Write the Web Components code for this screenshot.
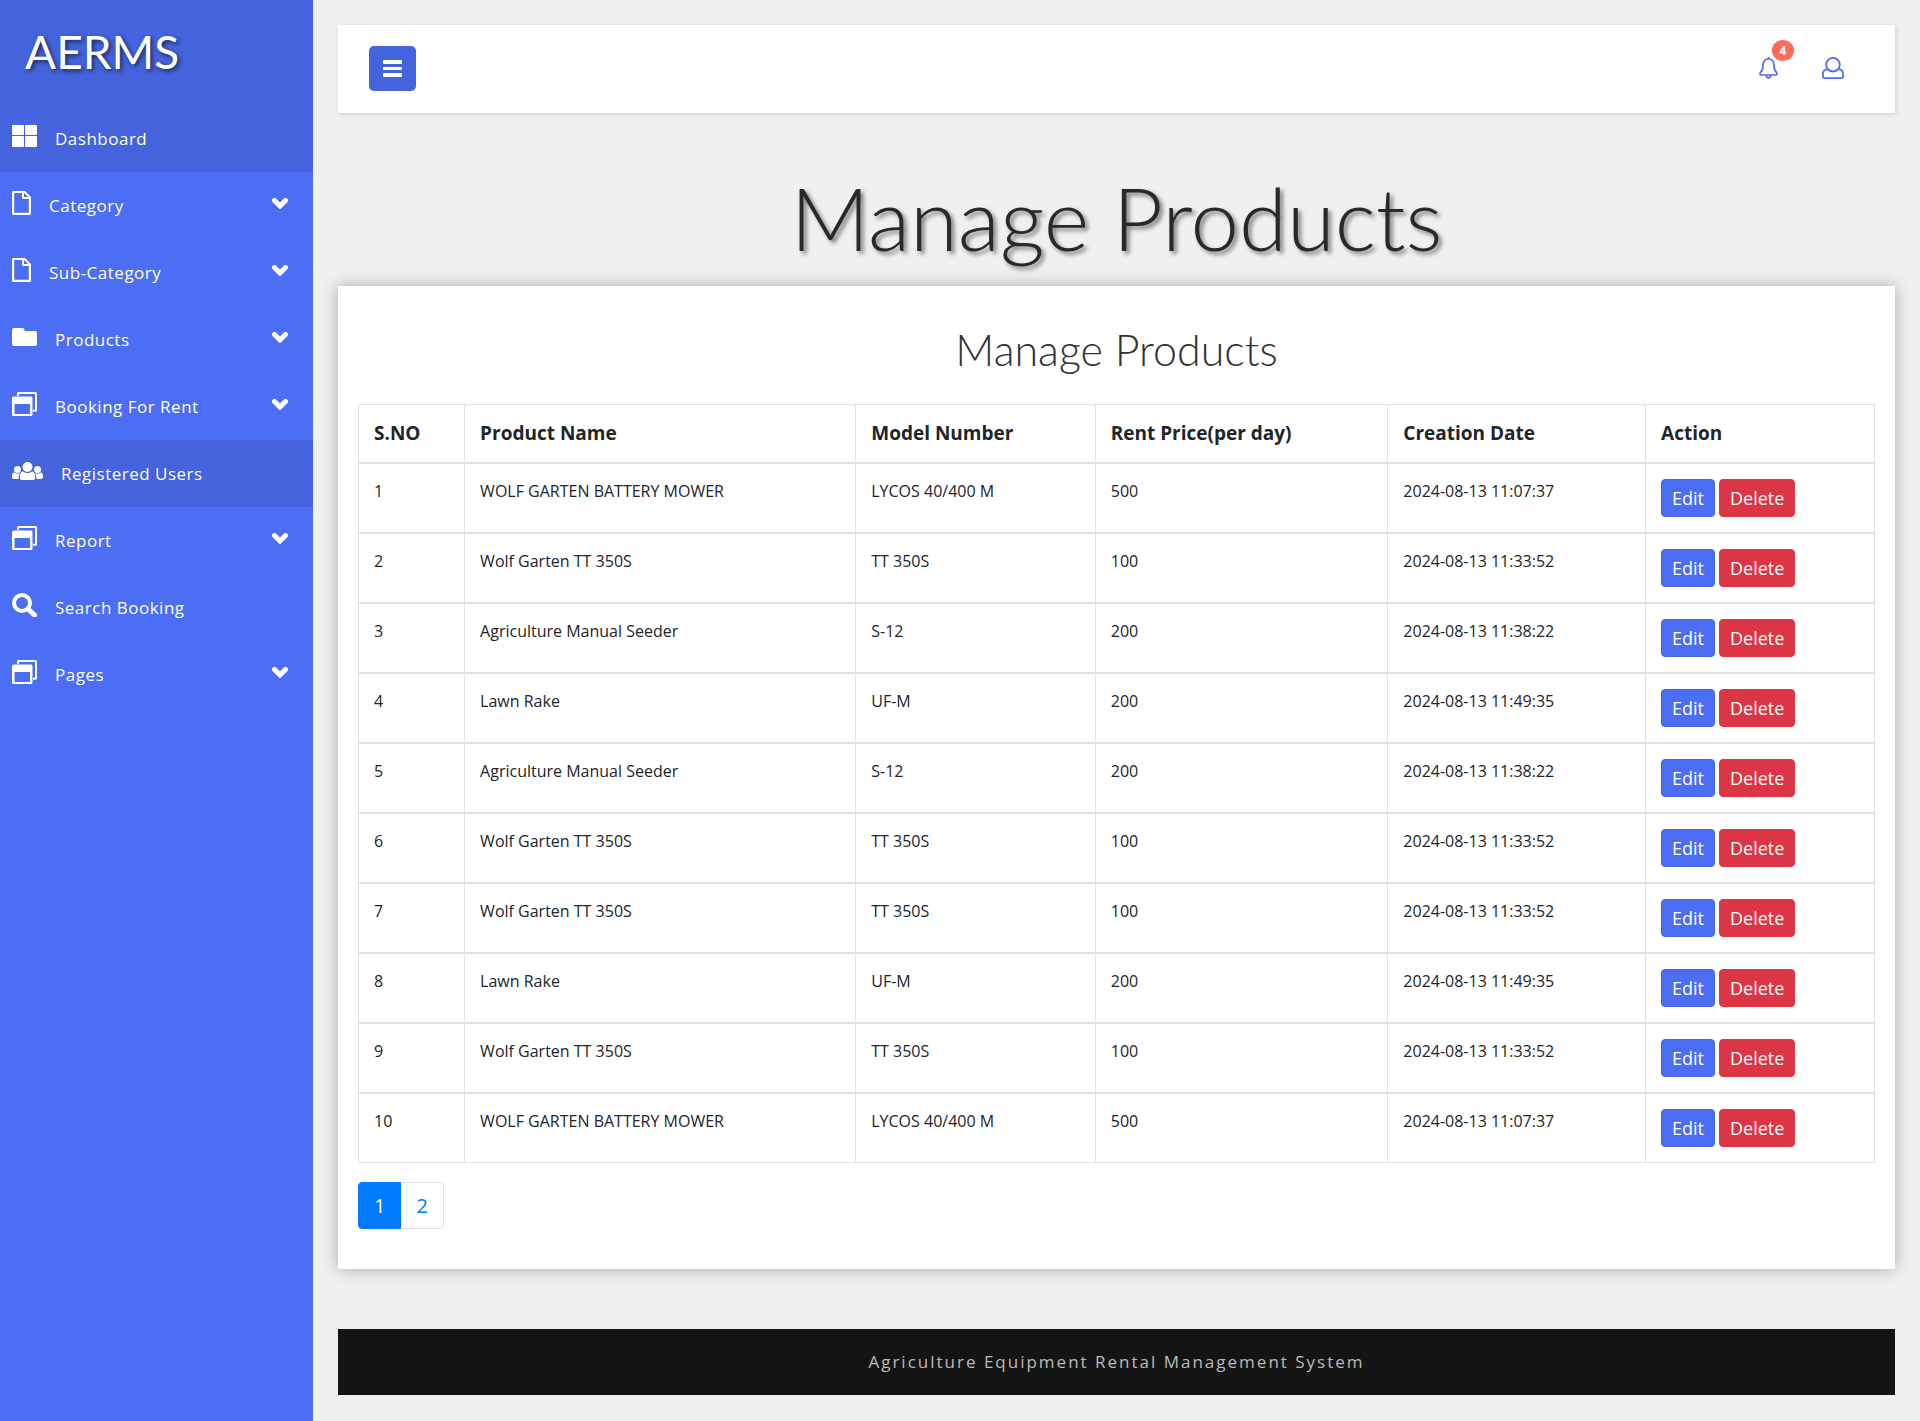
<!DOCTYPE html>
<html lang="en">
<head>
<meta charset="utf-8">
<meta name="viewport" content="width=device-width, initial-scale=1">
<title>AERMS - Manage Products</title>
<style>
  body {
    margin: 0;
    background: #f0f0f0;
    color: #212529;
    font-family: "Open Sans", "Noto Sans", sans-serif;
    font-size: 17px;
    line-height: 24px;
  }
</style>
</head>
<body>
<app-shell>
  <app-sidebar slot="sidebar" brand="AERMS">
    <nav-item icon="dashboard" active>Dashboard</nav-item>
    <nav-item icon="file" expandable>Category</nav-item>
    <nav-item icon="file" expandable>Sub-Category</nav-item>
    <nav-item icon="folder" expandable>Products</nav-item>
    <nav-item icon="windows" expandable>Booking For Rent</nav-item>
    <nav-item icon="users" active>Registered Users</nav-item>
    <nav-item icon="windows" expandable>Report</nav-item>
    <nav-item icon="search">Search Booking</nav-item>
    <nav-item icon="windows" expandable>Pages</nav-item>
  </app-sidebar>
  <top-bar count="4"></top-bar>
  <page-title>Manage Products</page-title>
  <content-card heading="Manage Products">
    <product-table></product-table>
    <page-links pages="2" current="1"></page-links>
  </content-card>
  <page-footer>Agriculture Equipment Rental Management System</page-footer>
</app-shell>

<script>
const ICONS = {
  dashboard: [25, 22, '<rect width="12" height="10" rx="1"/><rect x="13" width="12" height="10" rx="1"/><rect y="11" width="12" height="11" rx="1"/><rect x="13" y="11" width="12" height="11" rx="1"/>'],
  file: [19, 24, '<path fill-rule="evenodd" d="M1.500 0H13l6 6v16.500a1.500 1.500 0 0 1-1.500 1.500h-16A1.500 1.500 0 0 1 0 22.500v-21A1.500 1.500 0 0 1 1.500 0zM2.200 2v19.800h14.600V8h-5.300A1.500 1.500 0 0 1 10 6.500V2zM12 2.200V6h4.300L12.600 2.400z"/>'],
  folder: [25, 18, '<path d="M2 0h8.500a2 2 0 0 1 2 2v1H23a2 2 0 0 1 2 2v11a2 2 0 0 1-2 2H2a2 2 0 0 1-2-2V2a2 2 0 0 1 2-2z"/>'],
  windows: [25, 24, '<path fill-rule="evenodd" d="M1.500 4.500h17.500a1.500 1.500 0 0 1 1.500 1.500v16.500a1.500 1.500 0 0 1-1.500 1.500H1.500A1.500 1.500 0 0 1 0 22.500V6a1.500 1.500 0 0 1 1.500-1.500zM2.500 12v10h15.500V12z"/><path d="M5 4V1.500A1.500 1.500 0 0 1 6.500 0h17A1.500 1.500 0 0 1 25 1.500v16.700a1.500 1.500 0 0 1-1.500 1.500H21v-2h2V2H7v2z"/>'],
  users: [31, 18, '<circle cx="15.500" cy="5" r="5"/><circle cx="5.500" cy="7.500" r="3.500"/><circle cx="25.500" cy="7.500" r="3.500"/><path d="M11 9.500q4.500 3 9 0c2 0 3.200 2.500 3.200 6 0 1.700-.800 2.500-2.300 2.500H10.100C8.600 18 7.800 17.200 7.800 15.500c0-3.500 1.200-6 3.200-6z"/><path d="M2 10.500q3 2 6 .500c-1 1.500-1.500 3.500-1.500 6H2c-1.300 0-2-.800-2-2 0-2.500.500-4.500 2-4.500zM29 10.500q-3 2-6 .500c1 1.500 1.500 3.500 1.500 6H29c1.300 0 2-.800 2-2 0-2.500-.500-4.500-2-4.500z"/>'],
  search: [25, 24, '<circle cx="10" cy="10" r="8" fill="none" stroke="currentColor" stroke-width="4"/><path d="M16 16l6.500 6" stroke="currentColor" stroke-width="5" stroke-linecap="round"/>'],
  chevron: [16, 11, '<path d="M2.500 2.500L8 8l5.500-5.500" fill="none" stroke="currentColor" stroke-width="5" stroke-linecap="round"/>'],
  bars: [19, 17, '<rect width="19" height="4" rx="1"/><rect y="7" width="19" height="3" rx="1"/><rect y="13" width="19" height="4" rx="1"/>'],
  bell: [19, 22, '<g fill="none" stroke="currentColor" stroke-width="1.700"><path d="M9.500 2C5.500 2 4 5 4 8.500c0 4-1 5.500-2.300 6.700C.5 16.500.8 18 2.300 18h14.400c1.500 0 1.800-1.500.600-2.800C16 14 15 12.500 15 8.500 15 5 13.500 2 9.500 2z"/><path d="M9.500 0v2M7.300 18c0 3.800 4.400 3.800 4.400 0"/></g>'],
  user: [22, 22, '<g fill="none" stroke="currentColor" stroke-width="1.800"><ellipse cx="11" cy="7.700" rx="6.800" ry="6.800"/><path d="M5.200 12.300C2.300 12.300.9 14.500.9 17v2c0 1.300.7 2.100 2 2.100h16.200c1.300 0 2-.8 2-2.100v-2c0-2.500-1.400-4.700-4.300-4.700"/></g>']
};

function icon(name) {
  const [w, h, shape] = ICONS[name];
  return `<svg width="${w}" height="${h}" viewBox="0 0 ${w} ${h}" fill="currentColor" aria-hidden="true">${shape}</svg>`;
}

/** Page frame: sidebar on the left, stacked content on the right */
class AppShell extends HTMLElement {
  constructor() {
    super();
    this.attachShadow({ mode: 'open' }).innerHTML = `
      <style>
        :host {
          display: grid;
          grid-template-columns: 313px minmax(0, 1fr);
          min-height: 100vh;
        }
        main { padding: 25px; }
      </style>
      <slot name="sidebar"></slot>
      <main><slot></slot></main>
    `;
  }
}

class AppSidebar extends HTMLElement {
  connectedCallback() {
    this.attachShadow({ mode: 'open' }).innerHTML = `
      <style>
        :host { display: block; background: #4b6ef5; color: #fff; }
        header { background: #4463dc; padding: 20px 25px; height: 65px; }
        a {
          color: inherit;
          text-decoration: none;
          font: 400 46px/64px Lato, sans-serif;
          text-shadow: 2px 2px 4px rgba(0, 0, 0, 0.6);
        }
        nav { display: flex; flex-direction: column; }
      </style>
      <header><a href="#">${this.getAttribute('brand')}</a></header>
      <nav><slot></slot></nav>
    `;
  }
}

class NavItem extends HTMLElement {
  connectedCallback() {
    const arrow = this.hasAttribute('expandable') ? icon('chevron') : '';
    this.attachShadow({ mode: 'open' }).innerHTML = `
      <style>
        :host { display: block; }
        :host([active]) { background: #4463dc; }
        a {
          display: flex;
          align-items: center;
          gap: 18px;
          height: 62px;
          padding: 0 25px 5px 12px;
          color: #fff;
          letter-spacing: 0.5px;
          text-decoration: none;
        }
        .label { flex: 1; padding-top: 5px; }
      </style>
      <a href="#">${icon(this.getAttribute('icon'))}<span class="label"><slot></slot></span>${arrow}</a>
    `;
  }
}

class TopBar extends HTMLElement {
  connectedCallback() {
    this.attachShadow({ mode: 'open' }).innerHTML = `
      <style>
        :host {
          display: flex;
          align-items: center;
          justify-content: space-between;
          height: 86px;
          padding: 0 51px 2px 31px;
          background: #fff;
          box-shadow: 1px 1px 4px rgba(0, 0, 0, 0.15);
        }
        button {
          display: grid;
          place-items: center;
          width: 47px;
          height: 45px;
          padding: 0;
          border: 0;
          border-radius: 5px;
          background: #4463dc;
          color: #fff;
        }
        .links { display: flex; align-items: center; gap: 44px; }
        .links a { display: block; position: relative; color: #4b6ef5; text-decoration: none; }
        .links svg { display: block; }
        .badge {
          position: absolute;
          left: 13px;
          bottom: 18px;
          width: 22px;
          border-radius: 50%;
          background: #ff695c;
          color: #fff;
          font-size: 12px;
          font-weight: 700;
          line-height: 21px;
          text-align: center;
        }
      </style>
      <button type="button" aria-label="Toggle menu">${icon('bars')}</button>
      <div class="links">
        <a href="#" aria-label="Notifications">${icon('bell')}<span class="badge">${this.getAttribute('count')}</span></a>
        <a href="#" aria-label="Profile">${icon('user')}</a>
      </div>
    `;
  }
}

class PageTitle extends HTMLElement {
  connectedCallback() {
    this.attachShadow({ mode: 'open' }).innerHTML = `
      <style>
        :host { display: block; padding: 50px 0 13px; }
        h1 {
          margin: 0;
          color: #292929;
          font: 300 87px/110px Lato, sans-serif;
          text-align: center;
          text-shadow: 3px 3px 4px rgba(0, 0, 0, 0.5);
        }
      </style>
      <h1><slot></slot></h1>
    `;
  }
}

class ContentCard extends HTMLElement {
  connectedCallback() {
    this.attachShadow({ mode: 'open' }).innerHTML = `
      <style>
        :host {
          display: block;
          margin-bottom: 60px;
          padding: 34px 20px 40px;
          background: #fff;
          box-shadow: 0 0 15px rgba(0, 0, 0, 0.3);
        }
        h2 {
          margin: 0 0 24px;
          color: #333;
          font: 300 43px/60px Lato, sans-serif;
          text-align: center;
        }
      </style>
      <h2>${this.getAttribute('heading')}</h2>
      <slot></slot>
    `;
  }
}

const MOWER = ['WOLF GARTEN BATTERY MOWER', 'LYCOS 40/400 M', '500', '2024-08-13 11:07:37'];
const GARTEN = ['Wolf Garten TT 350S', 'TT 350S', '100', '2024-08-13 11:33:52'];
const SEEDER = ['Agriculture Manual Seeder', 'S-12', '200', '2024-08-13 11:38:22'];
const RAKE = ['Lawn Rake', 'UF-M', '200', '2024-08-13 11:49:35'];
const PRODUCTS = [MOWER, GARTEN, SEEDER, RAKE, SEEDER, GARTEN, GARTEN, RAKE, GARTEN, MOWER];
const COLUMNS = ['S.NO', 'Product Name', 'Model Number', 'Rent Price(per day)', 'Creation Date', 'Action'];

class ProductTable extends HTMLElement {
  connectedCallback() {
    const head = COLUMNS.map(name => `<th scope="col">${name}</th>`).join('');
    const rows = PRODUCTS.map((product, i) => `
      <tr>
        <td>${i + 1}</td>
        ${product.map(value => `<td>${value}</td>`).join('')}
        <td><div class="actions"><button type="button">Edit</button><button type="button" class="danger">Delete</button></div></td>
      </tr>`).join('');

    this.attachShadow({ mode: 'open' }).innerHTML = `
      <style>
        :host { display: block; }
        table {
          width: 100%;
          table-layout: fixed;
          border-spacing: 0;
          border: solid #dee2e6;
          border-width: 1px 0 0 1px;
        }
        col:nth-child(1) { width: 7%; }
        col:nth-child(2) { width: 25.8%; }
        col:nth-child(3) { width: 15.8%; }
        col:nth-child(4) { width: 19.3%; }
        col:nth-child(5) { width: 17%; }
        th, td {
          padding: 15px;
          border: solid #dee2e6;
          border-width: 0 1px 2px 0;
          text-align: left;
          vertical-align: top;
        }
        th { font-size: 19px; font-weight: 700; line-height: 27px; }
        td { font-size: 16px; }
        tbody tr:last-child td { border-bottom-width: 1px; }
        .actions { display: flex; gap: 4px; }
        button {
          padding: 5px 10px;
          border: 1px solid #4463dc;
          border-radius: 4px;
          background: #4b6ef5;
          color: #fff;
          font: 400 18px/26px "Open Sans", "Noto Sans", sans-serif;
        }
        .danger { border-color: #dc3545; background: #dc3545; }
      </style>
      <table>
        <colgroup><col><col><col><col><col><col></colgroup>
        <thead><tr>${head}</tr></thead>
        <tbody>${rows}</tbody>
      </table>
    `;
  }
}

class PageLinks extends HTMLElement {
  connectedCallback() {
    const current = Number(this.getAttribute('current'));
    let links = '';
    for (let n = 1; n <= Number(this.getAttribute('pages')); n++) {
      links += `<a href="#"${n === current ? ' aria-current="page"' : ''}>${n}</a>`;
    }
    this.attachShadow({ mode: 'open' }).innerHTML = `
      <style>
        :host { display: block; margin-top: 19px; }
        nav { display: flex; }
        a {
          padding: 8px 15px;
          border: 1px solid #dee2e6;
          color: #007bff;
          font-size: 20px;
          line-height: 29px;
          text-decoration: none;
        }
        a + a { border-left: 0; }
        a:first-child { border-radius: 4px 0 0 4px; }
        a:last-child { border-radius: 0 4px 4px 0; }
        a[aria-current] { border-color: #007bff; background: #007bff; color: #fff; }
      </style>
      <nav aria-label="Pages">${links}</nav>
    `;
  }
}

class PageFooter extends HTMLElement {
  connectedCallback() {
    this.attachShadow({ mode: 'open' }).innerHTML = `
      <style>
        :host { display: block; background: #141414; }
        footer {
          padding: 21px;
          color: #bbb;
          letter-spacing: 2px;
          text-align: center;
        }
      </style>
      <footer><slot></slot></footer>
    `;
  }
}

customElements.define('app-shell', AppShell);
customElements.define('app-sidebar', AppSidebar);
customElements.define('nav-item', NavItem);
customElements.define('top-bar', TopBar);
customElements.define('page-title', PageTitle);
customElements.define('content-card', ContentCard);
customElements.define('product-table', ProductTable);
customElements.define('page-links', PageLinks);
customElements.define('page-footer', PageFooter);
</script>
</body>
</html>
